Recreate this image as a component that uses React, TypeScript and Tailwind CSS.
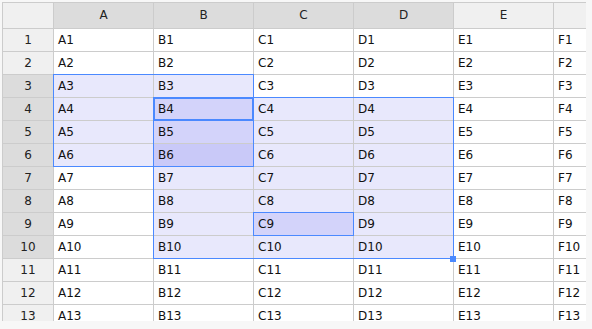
import React from 'react';

const COLS = ['A', 'B', 'C', 'D', 'E', 'F'];
const ROWS = Array.from({ length: 13 }, (_, i) => i + 1);

// selection layers: [col from, col to, row from, row to]
const RANGES: [number, number, number, number][] = [
    [0, 1, 3, 6],
    [1, 3, 4, 10],
    [2, 2, 9, 9],
];

const layers = (c: number, r: number) => {
    let n = RANGES.filter(([c1, c2, r1, r2]) => c >= c1 && c <= c2 && r >= r1 && r <= r2).length;
    if (c === 1 && r === 6) n += 1;
    return n;
};

const fill = (n: number) => {
    if (n >= 3) return 'bg-[#c9c9f8]';
    if (n === 2) return 'bg-[#d3d3fa]';
    if (n === 1) return 'bg-[#e8e8fc]';
    return 'bg-white';
};

const colHighlighted = (c: number) => c <= 3;
const rowHighlighted = (r: number) => r >= 3 && r <= 10;

export default function App() {
    return (
        <div className="w-[592px] h-[329px] bg-[#f7f7f7] pl-[2px] pt-[2px] font-['DejaVu_Sans',Verdana,sans-serif] text-[12px]">
            <div className="relative w-[584px] h-[319px] overflow-hidden">
                <div className="w-max border-l border-t border-[#cccccc]">
                    <div className="flex">
                        <div className="w-[51px] h-[26px] shrink-0 bg-[#f0f0f0] border-r border-b border-[#cccccc]" />
                        {COLS.map((c, i) => (
                            <div
                                key={c}
                                className={`w-[100px] h-[26px] shrink-0 border-r border-b border-[#cccccc] text-center leading-[25px] text-[#222] ${colHighlighted(i) ? 'bg-[#dcdcdc]' : 'bg-[#f0f0f0]'}`}
                            >
                                {c}
                            </div>
                        ))}
                    </div>
                    {ROWS.map((r) => (
                        <div key={r} className="flex">
                            <div
                                className={`w-[51px] h-[23px] shrink-0 border-r border-b border-[#cccccc] text-center leading-[23px] text-[#222] ${rowHighlighted(r) ? 'bg-[#dcdcdc]' : 'bg-[#f0f0f0]'}`}
                            >
                                {r}
                            </div>
                            {COLS.map((c, i) => (
                                <div
                                    key={c}
                                    className={`w-[100px] h-[23px] shrink-0 border-r border-b border-[#cccccc] pl-[4px] leading-[23px] text-[#111] overflow-hidden ${fill(layers(i, r))}`}
                                >
                                    {c}
                                    {r}
                                </div>
                            ))}
                        </div>
                    ))}
                </div>

                {/* selection borders */}
                <div className="absolute left-[51px] top-[72px] w-[201px] h-[93px] border border-[#4b89ff] pointer-events-none" />
                <div className="absolute left-[151px] top-[95px] w-[301px] h-[162px] border border-[#4b89ff] pointer-events-none" />
                <div className="absolute left-[251px] top-[210px] w-[101px] h-[24px] border border-[#4b89ff] pointer-events-none" />
                <div className="absolute left-[151px] top-[95px] w-[101px] h-[24px] border-2 border-[#4b89ff] pointer-events-none" />
                <div className="absolute left-[448px] top-[254px] w-[6px] h-[6px] bg-[#4b89ff]" />
            </div>
        </div>
    );
}
